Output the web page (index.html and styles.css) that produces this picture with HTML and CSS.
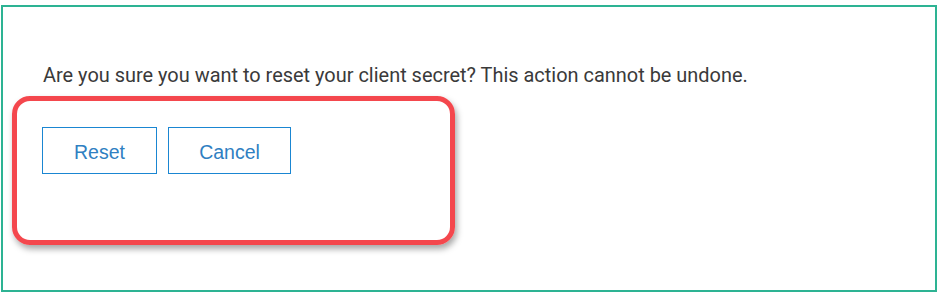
FILE: index.html
```html
<!DOCTYPE html>
<html>
<head>
<meta charset="utf-8">
<link rel="stylesheet" href="styles.css">
</head>
<body>
<div class="panel">
  <p class="message">Are you sure you want to reset your client secret? This action cannot be undone.</p>
  <div class="actions">
    <button class="btn btn-reset">Reset</button>
    <button class="btn btn-cancel">Cancel</button>
  </div>
  <div class="highlight"></div>
</div>
</body>
</html>
```
FILE: styles.css
```css
html, body {
  margin: 0;
  padding: 0;
  background: #ffffff;
}
.panel {
  position: relative;
  box-sizing: border-box;
  margin: 5px 0 0 1px;
  width: 936px;
  height: 287px;
  border: 2px solid #2db393;
  padding: 56px 0 0 40px;
}
.message {
  margin: 0;
  font-family: Roboto, "Liberation Sans", sans-serif;
  font-size: 19.95px;
  line-height: 24px;
  color: #3a3a3a;
}
.actions {
  display: flex;
  gap: 11px;
  margin: 40px 0 0 -1px;
}
.btn {
  appearance: none;
  -webkit-appearance: none;
  box-sizing: border-box;
  height: 47px;
  background: #ffffff;
  border: 1px solid #1a86d2;
  border-radius: 0;
  font-family: "Liberation Sans", Arial, sans-serif;
  font-size: 19.5px;
  color: #2f80c2;
  padding: 3px 0 0 0;
}
.btn-reset { width: 115px; }
.btn-cancel { width: 123px; }
.highlight {
  position: absolute;
  left: 9px;
  top: 89px;
  width: 443px;
  height: 149px;
  box-sizing: border-box;
  border: 5px solid #f4474d;
  border-radius: 18px;
  box-shadow: 2px 4px 6px rgba(0, 0, 0, 0.35);
  pointer-events: none;
}
```
